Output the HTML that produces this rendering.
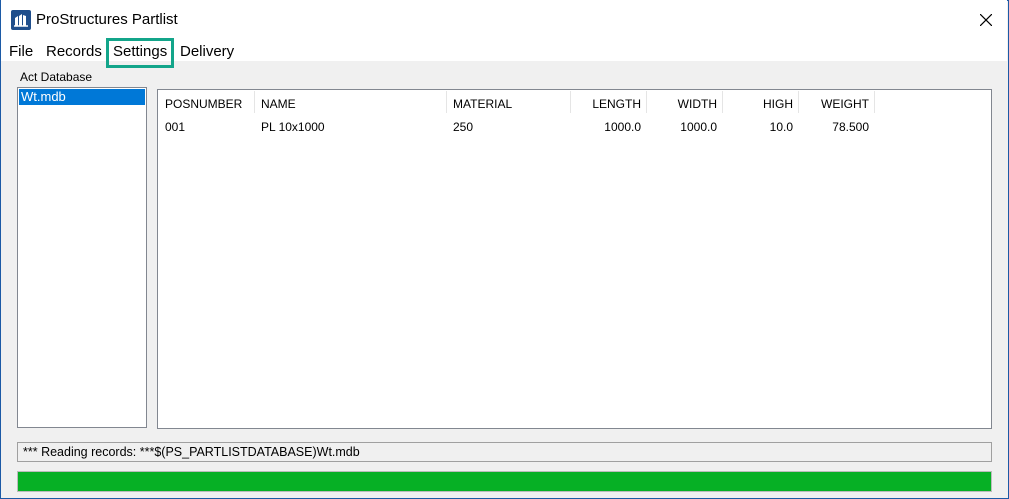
<!DOCTYPE html><html><head><style>
body{margin:0;width:1009px;height:499px;overflow:hidden;font-family:"Liberation Sans",sans-serif;}
.win{position:absolute;left:0;top:0;width:1009px;height:499px;box-shadow:inset 0 0 0 1px #1c5aa6;background:#f0f0f0;}
.title{position:absolute;left:1px;top:0;width:1006px;height:38px;background:#fff;}
.menu{position:absolute;left:1px;top:38px;width:1006px;height:23px;background:#fff;}
.t{position:absolute;white-space:nowrap;}
.box{position:absolute;background:#fff;border:1px solid #828790;}
.c{position:absolute;font-size:12px;color:#000;white-space:nowrap;}
.sep{position:absolute;top:1px;width:1px;height:22px;background:#e5e5e5;}
</style></head><body><div class="win">
<div class="title">
<svg style="position:absolute;left:10px;top:10px" width="20" height="20"><rect width="20" height="20" rx="2" fill="#1f4e8c"/><path d="M4 16V8l3-2v10zM8 16V6l3-2v12zM12 16V5l3 1v10z" fill="#fff"/><path d="M3 16h14" stroke="#fff" stroke-width="1.5"/></svg>
<div class="t" style="left:35px;top:11px;font-size:15px;">ProStructures Partlist</div>
<svg style="position:absolute;left:979px;top:14px" width="12" height="12"><path d="M0 0L12 12M12 0L0 12" stroke="#000" stroke-width="1.2"/></svg>
</div>
<div class="menu">
<div class="t" style="left:8px;top:5px;font-size:15px;">File</div>
<div class="t" style="left:45px;top:5px;font-size:15px;">Records</div>
<div style="position:absolute;left:105px;top:0px;width:62px;height:24px;border:3px solid #13a58a;"></div>
<div class="t" style="left:112px;top:5px;font-size:15px;">Settings</div>
<div class="t" style="left:179px;top:5px;font-size:15px;">Delivery</div>
</div>
<div class="t" style="left:20px;top:70px;font-size:12px;">Act Database</div>
<div class="box" style="left:17px;top:87px;width:128px;height:339px;">
<div style="position:absolute;left:1px;top:1px;width:126px;height:16px;background:#0078d7;color:#fff;font-size:13px;line-height:16px;padding-left:2px;box-sizing:border-box;">Wt.mdb</div></div>
<div class="box" style="left:157px;top:89px;width:833px;height:338px;">
<div class="sep" style="left:96px"></div><div class="sep" style="left:288px"></div><div class="sep" style="left:412px"></div><div class="sep" style="left:488px"></div><div class="sep" style="left:564px"></div><div class="sep" style="left:640px"></div><div class="sep" style="left:716px"></div>
<div class="c" style="left:7px;top:7px">POSNUMBER</div>
<div class="c" style="left:103px;top:7px">NAME</div>
<div class="c" style="left:295px;top:7px">MATERIAL</div>
<div class="c" style="left:412px;width:71px;text-align:right;top:7px">LENGTH</div>
<div class="c" style="left:488px;width:71px;text-align:right;top:7px">WIDTH</div>
<div class="c" style="left:564px;width:71px;text-align:right;top:7px">HIGH</div>
<div class="c" style="left:640px;width:71px;text-align:right;top:7px">WEIGHT</div>
<div class="c" style="left:7px;top:30px">001</div>
<div class="c" style="left:103px;top:30px">PL 10x1000</div>
<div class="c" style="left:295px;top:30px">250</div>
<div class="c" style="left:412px;width:71px;text-align:right;top:30px">1000.0</div>
<div class="c" style="left:488px;width:71px;text-align:right;top:30px">1000.0</div>
<div class="c" style="left:564px;width:71px;text-align:right;top:30px">10.0</div>
<div class="c" style="left:640px;width:71px;text-align:right;top:30px">78.500</div>
</div>
<div style="position:absolute;left:17px;top:442px;width:973px;height:18px;border:1px solid #a0a0a0;background:#f0f0f0;"><div class="c" style="left:5px;top:2px;font-size:12.5px;">*** Reading records: ***$(PS_PARTLISTDATABASE)Wt.mdb</div></div>
<div style="position:absolute;left:17px;top:471px;width:973px;height:19px;border:1px solid #bcbcbc;background:#06b025;"></div>
</div></body></html>
